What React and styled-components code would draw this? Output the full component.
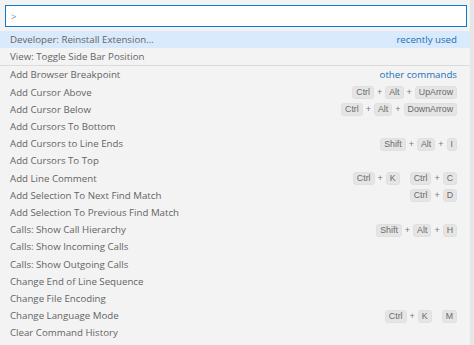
import styled, { createGlobalStyle } from 'styled-components';

const Global = createGlobalStyle`
  html, body { margin: 0; padding: 0; background: #f3f3f3; }
  body { font-family: "Open Sans", "Noto Sans", sans-serif; }
`;

const Panel = styled.div`
  width: 474px;
  height: 345px;
  background: #f3f3f3;
  overflow: hidden;
  display: flex;
  flex-direction: column;
  box-sizing: border-box;
  border-right: 4px solid #e6e6e6;
`;

const InputWrap = styled.div`
  padding: 5px 3px 4px 5px;
`;

const Input = styled.div`
  height: 20px;
  border: 1px solid #0e78cc;
  background: #fff;
  display: flex;
  align-items: center;
  padding-left: 5px;
  font-size: 9.5px;
  color: #888;
`;

const List = styled.div`
  display: flex;
  flex-direction: column;
`;

const Row = styled.div`
  height: 17.2px;
  display: flex;
  align-items: center;
  justify-content: space-between;
  padding: 0 13px 0 10px;
  font-size: 9.7px;
  color: #646464;
  background: ${(p) => (p.$active ? '#d8eafc' : 'transparent')};
  border-top: ${(p) => (p.$sep ? '1px solid #dcdcdc' : 'none')};
  white-space: nowrap;
`;

const Tag = styled.span`
  color: #1a6fb8;
`;

const Keys = styled.div`
  display: flex;
  align-items: center;
  gap: 10px;
`;

const Chord = styled.div`
  display: flex;
  align-items: center;
`;

const Cap = styled.span`
  display: inline-block;
  background: #e5e5e5;
  border: 1px solid #e0e0e0;
  border-radius: 3px;
  padding: 0 3px;
  font-family: "Liberation Sans", Arial, sans-serif;
  font-size: 8.8px;
  line-height: 11px;
  color: #6a6a6a;
`;

const Plus = styled.span`
  font-family: "Liberation Sans", Arial, sans-serif;
  font-size: 9px;
  color: #777;
  margin: 0 3px;
`;

const rows = [
  { label: 'Developer: Reinstall Extension...', tag: 'recently used', active: true },
  { label: 'View: Toggle Side Bar Position' },
  { label: 'Add Browser Breakpoint', tag: 'other commands', sep: true },
  { label: 'Add Cursor Above', keys: [['Ctrl', 'Alt', 'UpArrow']] },
  { label: 'Add Cursor Below', keys: [['Ctrl', 'Alt', 'DownArrow']] },
  { label: 'Add Cursors To Bottom' },
  { label: 'Add Cursors to Line Ends', keys: [['Shift', 'Alt', 'I']] },
  { label: 'Add Cursors To Top' },
  { label: 'Add Line Comment', keys: [['Ctrl', 'K'], ['Ctrl', 'C']] },
  { label: 'Add Selection To Next Find Match', keys: [['Ctrl', 'D']] },
  { label: 'Add Selection To Previous Find Match' },
  { label: 'Calls: Show Call Hierarchy', keys: [['Shift', 'Alt', 'H']] },
  { label: 'Calls: Show Incoming Calls' },
  { label: 'Calls: Show Outgoing Calls' },
  { label: 'Change End of Line Sequence' },
  { label: 'Change File Encoding' },
  { label: 'Change Language Mode', keys: [['Ctrl', 'K'], ['M']] },
  { label: 'Clear Command History' },
];

function KeyBinding({ chords }) {
  return (
    <Keys>
      {chords.map((chord, i) => (
        <Chord key={i}>
          {chord.map((k, j) => (
            <span key={j}>
              {j > 0 && <Plus>+</Plus>}
              <Cap>{k}</Cap>
            </span>
          ))}
        </Chord>
      ))}
    </Keys>
  );
}

export default function App() {
  return (
    <>
      <Global />
      <Panel>
        <InputWrap>
          <Input>&gt;</Input>
        </InputWrap>
        <List>
          {rows.map((r, i) => (
            <Row key={i} $active={r.active} $sep={r.sep}>
              <span>{r.label}</span>
              {r.tag && <Tag>{r.tag}</Tag>}
              {r.keys && <KeyBinding chords={r.keys} />}
            </Row>
          ))}
        </List>
      </Panel>
    </>
  );
}
